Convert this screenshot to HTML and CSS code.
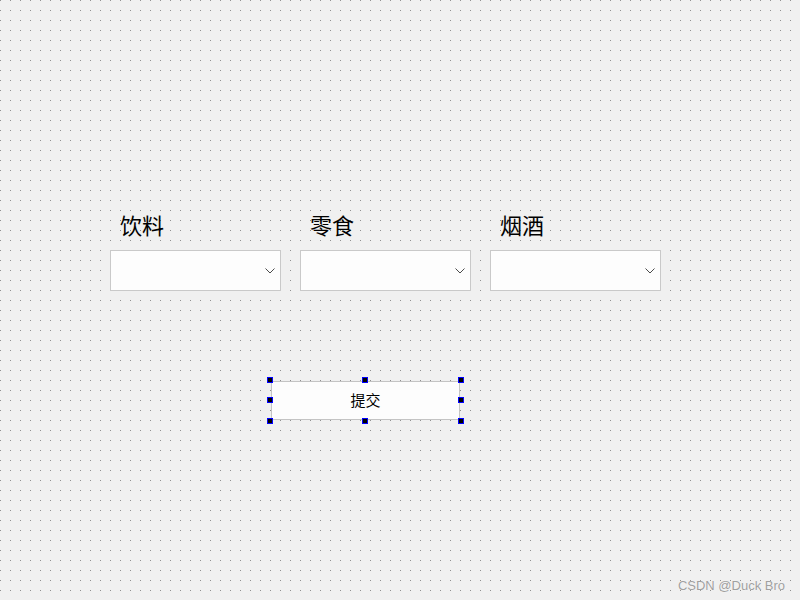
FILE: index.html
```html
<!DOCTYPE html>
<html lang="zh">
<head>
<meta charset="utf-8">
<title>Form</title>
<link rel="stylesheet" href="styles.css">
</head>
<body>
<main class="form">
  <div class="fields">
    <div class="field">
      <span class="label">饮料</span>
      <div class="combo"><svg class="chev" width="10" height="6" viewBox="0 0 10 6"><polyline points="0.5,0.5 5,5 9.5,0.5" fill="none" stroke="#4a4a4a" stroke-width="1"/></svg></div>
    </div>
    <div class="field">
      <span class="label">零食</span>
      <div class="combo"><svg class="chev" width="10" height="6" viewBox="0 0 10 6"><polyline points="0.5,0.5 5,5 9.5,0.5" fill="none" stroke="#4a4a4a" stroke-width="1"/></svg></div>
    </div>
    <div class="field">
      <span class="label">烟酒</span>
      <div class="combo"><svg class="chev" width="10" height="6" viewBox="0 0 10 6"><polyline points="0.5,0.5 5,5 9.5,0.5" fill="none" stroke="#4a4a4a" stroke-width="1"/></svg></div>
    </div>
  </div>
  <div class="submit-wrap">
    <button class="submit" type="button">提交</button>
    <span class="handle h-tl"></span>
    <span class="handle h-tm"></span>
    <span class="handle h-tr"></span>
    <span class="handle h-ml"></span>
    <span class="handle h-mr"></span>
    <span class="handle h-bl"></span>
    <span class="handle h-bm"></span>
    <span class="handle h-br"></span>
  </div>
</main>
<div class="watermark">CSDN @Duck Bro</div>
</body>
</html>
```

FILE: styles.css
```css
html, body {
  margin: 0;
  padding: 0;
  width: 800px;
  height: 600px;
  overflow: hidden;
}
body {
  position: relative;
  background-color: #f0f0f0;
  background-image:
    linear-gradient(to right, transparent 1px, #f0f0f0 1px),
    linear-gradient(to bottom, #8f8f8f 1px, #f0f0f0 1px);
  background-size: 10px 10px;
  font-family: "Noto Sans CJK SC", "Liberation Sans", sans-serif;
}
.form {
  padding: 213px 0 0 110px;
  display: flex;
  flex-direction: column;
}
.fields {
  display: flex;
  gap: 19px;
}
.field {
  display: flex;
  flex-direction: column;
}
.label {
  font-size: 22px;
  line-height: 22px;
  height: 22px;
  padding-left: 10px;
  margin-bottom: 15px;
  color: #000;
}
.combo {
  box-sizing: border-box;
  width: 171px;
  height: 41px;
  border: 1px solid #c9c9c9;
  background: #fdfdfd;
  display: flex;
  align-items: center;
  justify-content: flex-end;
  padding-right: 5px;
}
.chev {
  display: block;
  margin-top: 1px;
}
.submit-wrap {
  position: relative;
  width: 190px;
  height: 40px;
  margin: 89px 0 0 160px;
}
.submit {
  box-sizing: border-box;
  display: block;
  width: 189px;
  height: 39px;
  margin: 1px 0 0 1px;
  border: 1px solid #c4c4c4;
  background: #fdfdfd;
  font-family: "Noto Sans CJK SC", sans-serif;
  font-size: 15px;
  line-height: 15px;
  color: #000;
  padding: 0 0 2px 0;
}
.handle {
  position: absolute;
  box-sizing: border-box;
  width: 6px;
  height: 6px;
  background: #000;
  border: 1px solid #0000ff;
}
.h-tl { left: -3px; top: -3px; }
.h-tm { left: 92px; top: -3px; }
.h-tr { left: 188px; top: -3px; }
.h-ml { left: -3px; top: 17px; }
.h-mr { left: 188px; top: 17px; }
.h-bl { left: -3px; top: 38px; }
.h-bm { left: 92px; top: 38px; }
.h-br { left: 188px; top: 38px; }
.watermark {
  position: absolute;
  right: 15px;
  bottom: 7px;
  font-family: "Liberation Sans", Arial, sans-serif;
  font-size: 13px;
  line-height: 15px;
  color: #a0a0a0;
  text-shadow: 0 0 1px #ffffff;
}
```
